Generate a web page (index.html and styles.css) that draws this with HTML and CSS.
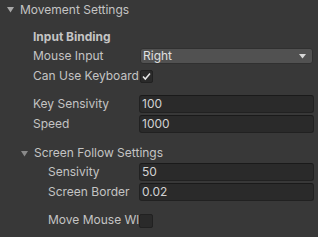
FILE: index.html
```html
<!DOCTYPE html>
<html>
<head>
<meta charset="utf-8">
<link rel="stylesheet" href="styles.css">
</head>
<body>
<div class="panel">
  <div class="header">
    <svg class="fold" width="8" height="6" viewBox="0 0 8 6"><polygon points="0,0 7,0 3.5,5.5" fill="#a8a8a8"/></svg>
    <span>Movement Settings</span>
  </div>

  <div class="row r-bind"><span class="label bold">Input Binding</span></div>

  <div class="row r-mouse">
    <span class="label">Mouse Input</span>
    <div class="dropdown">
      <span>Right</span>
      <svg class="arrow" width="7" height="5" viewBox="0 0 7 5"><polygon points="0,0 7,0 3.5,4.5" fill="#d8d8d8"/></svg>
    </div>
  </div>

  <div class="row r-gap2">
    <span class="label">Can Use Keyboard</span>
    <div class="check">
      <svg width="11" height="11" viewBox="0 0 11 11"><polyline points="2,5.5 4.3,8 9,2.5" fill="none" stroke="#e6e6e6" stroke-width="1.5"/></svg>
    </div>
  </div>

  <div class="row r-key">
    <span class="label">Key Sensivity</span>
    <div class="field">100</div>
  </div>

  <div class="row r-gap2">
    <span class="label">Speed</span>
    <div class="field">1000</div>
  </div>

  <div class="row sub r-follow">
    <svg class="fold2" width="8" height="6" viewBox="0 0 8 6"><polygon points="0,0 7,0 3.5,5.5" fill="#8a8a8a"/></svg>
    <span>Screen Follow Settings</span>
  </div>

  <div class="row nested r-gap1">
    <span class="label">Sensivity</span>
    <div class="field">50</div>
  </div>

  <div class="row nested r-gap2">
    <span class="label">Screen Border</span>
    <div class="field">0.02</div>
  </div>

  <div class="row nested r-move">
    <span class="label">Move Mouse Wl</span>
    <div class="check big"></div>
  </div>
</div>
</body>
</html>
```

FILE: styles.css
```css
html, body {
  margin: 0;
  padding: 0;
  background: #383838;
}
body {
  width: 318px;
  height: 237px;
  overflow: hidden;
  font-family: Inter, "Noto Sans", sans-serif;
  font-size: 12px;
  color: #c4c4c4;
}
.panel {
  display: flex;
  flex-direction: column;
}
.header {
  display: flex;
  align-items: center;
  height: 19px;
  padding-left: 7px;
  line-height: 18px;
}
.fold {
  margin-right: 5px;
  margin-top: 1px;
}
.row {
  display: flex;
  align-items: center;
  height: 18px;
  line-height: 18px;
  padding-left: 33px;
  padding-right: 4px;
}
.row.nested {
  padding-left: 48px;
}
.row.sub {
  padding-left: 21px;
}
.fold2 {
  margin-right: 5px;
  margin-top: 1px;
}
.r-bind { margin-top: 9px; }
.r-mouse { margin-top: 1px; }
.r-gap2 { margin-top: 2px; }
.r-gap1 { margin-top: 1px; }
.r-key { margin-top: 10px; }
.r-follow { margin-top: 11px; }
.r-move { margin-top: 10px; }

.label {
  width: 106px;
  flex: none;
  white-space: nowrap;
}
.nested .label {
  width: 91px;
}
.bold {
  font-weight: 700;
}
.field {
  flex: 1;
  box-sizing: border-box;
  height: 18px;
  background: #2a2a2a;
  border: 1px solid #212121;
  border-top-color: #1a1a1a;
  border-radius: 3px;
  padding-left: 2px;
  line-height: 16px;
  color: #d2d2d2;
}
.dropdown {
  flex: 1;
  box-sizing: border-box;
  height: 16px;
  margin-left: 1px;
  margin-right: 1px;
  background: #515151;
  border: 1px solid #303030;
  border-radius: 3px;
  padding-left: 2px;
  padding-right: 6px;
  display: flex;
  align-items: center;
  justify-content: space-between;
  line-height: 14px;
  color: #e0e0e0;
}
.arrow {
  margin-top: 1px;
}
.check {
  box-sizing: border-box;
  width: 13px;
  height: 13px;
  margin-left: 1px;
  background: #2a2a2a;
  border: 1px solid #212121;
  border-radius: 2px;
  display: flex;
  align-items: center;
  justify-content: center;
}
.check.big {
  width: 14px;
  height: 14px;
  margin-left: 0;
  margin-top: 2px;
}
```
